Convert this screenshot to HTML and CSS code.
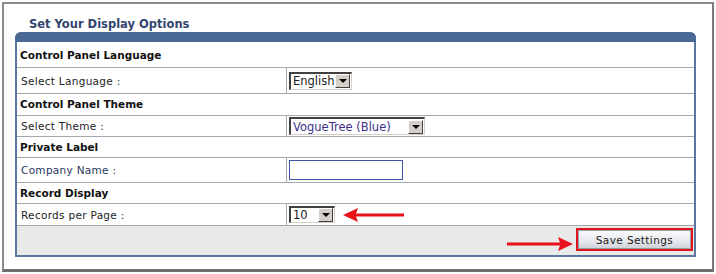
FILE: index.html
```html
<!DOCTYPE html>
<html>
<head>
<meta charset="utf-8">
<link rel="stylesheet" href="styles.css">
</head>
<body>
<div class="frame">
  <h1 class="title">Set Your Display Options</h1>
  <div class="panel">
    <div class="cap"></div>
    <div class="sect first">Control Panel Language</div>
    <div class="row r1">
      <div class="lbl">Select Language :</div>
      <div class="val">
        <div class="sel w-lang"><span class="txt">English</span><span class="btn"><i></i></span></div>
      </div>
    </div>
    <div class="sect s2">Control Panel Theme</div>
    <div class="row r2">
      <div class="lbl">Select Theme :</div>
      <div class="val">
        <div class="sel w-theme"><span class="txt">VogueTree (Blue)</span><span class="btn"><i></i></span></div>
      </div>
    </div>
    <div class="sect s3">Private Label</div>
    <div class="row r3">
      <div class="lbl">Company Name :</div>
      <div class="val"><div class="input"></div></div>
    </div>
    <div class="sect s4">Record Display</div>
    <div class="row r4">
      <div class="lbl">Records per Page :</div>
      <div class="val">
        <div class="sel w-rec"><span class="txt">10</span><span class="btn"><i></i></span></div>
        <svg class="arrow a1" width="61" height="14" viewBox="0 0 61 14"><polygon points="0,7 15,0 13,5.5 61,5.5 61,8.5 13,8.5 15,14" fill="#e8101a"/></svg>
      </div>
    </div>
    <div class="foot">
      <svg class="arrow a2" width="66" height="14" viewBox="0 0 66 14"><polygon points="66,7 51,0 53,5.5 0,5.5 0,8.5 53,8.5 51,14" fill="#e8101a"/></svg>
      <div class="hl"><div class="save">Save Settings</div></div>
    </div>
  </div>
</div>
</body>
</html>
```
FILE: styles.css
```css
html, body { margin: 0; padding: 0; background: #ffffff; }
body { width: 716px; height: 274px; overflow: hidden; font-family: "DejaVu Sans", Verdana, sans-serif; }

.frame {
  box-sizing: border-box;
  margin: 2px 0 0 2px;
  width: 712px;
  height: 270px;
  border: 2px solid #8c8c8c;
  border-right-color: #7a7a7a;
  border-bottom: 3px solid #6e6e6e;
  background: #fff;
  padding: 0 16px 0 11px;
}

.title {
  margin: 0;
  padding: 12px 0 0 14px;
  height: 28px;
  box-sizing: border-box;
  font-size: 11.5px;
  font-weight: bold;
  color: #34456f;
  line-height: 16px;
}

.panel {
  border-left: 2px solid #5b779f;
  border-right: 2px solid #5b779f;
  border-bottom: 2px solid #5b779f;
  border-radius: 6px 6px 0 0;
  background: #fff;
}
.cap {
  height: 10px;
  background: #4a6894;
  margin: 0 -2px;
  border-radius: 6px 6px 0 0;
}

.sect {
  box-sizing: border-box;
  height: 22px;
  padding: 3px 0 0 3px;
  font-size: 10.5px;
  font-weight: bold;
  color: #111;
  line-height: 14px;
  border-bottom: 1px solid #a3a8ae;
}
.sect.first { height: 26px; padding-top: 6px; }
.sect.s3 { height: 21px; }
.sect.s4 { height: 21px; }

.row {
  display: grid;
  grid-template-columns: 270px 1fr;
  border-bottom: 1px solid #a3a8ae;
  box-sizing: border-box;
}
.r1 { height: 26px; }
.r2 { height: 21px; }
.r3 { height: 25px; }
.r4 { height: 22px; }

.lbl {
  border-right: 1px solid #a3a8ae;
  padding-left: 4px;
  font-size: 10.5px;
  color: #222;
  letter-spacing: 0.3px;
  display: flex;
  align-items: center;
}
.r3 .lbl { color: #2a3560; }

.val {
  display: flex;
  align-items: center;
  padding-left: 2px;
}
.r2 .val { align-items: flex-start; padding-top: 1px; }

.sel {
  box-sizing: border-box;
  display: flex;
  align-items: center;
  justify-content: space-between;
  height: 18px;
  border-top: 2px solid #404040;
  border-left: 2px solid #404040;
  border-right: 1px solid #d4d0c8;
  border-bottom: 1px solid #d4d0c8;
  background: #fff;
  padding-right: 1px;
}
.sel .txt {
  font-size: 11.5px;
  color: #1a1a1a;
  padding-left: 2px;
  line-height: 14px;
}
.w-lang { width: 63px; }
.w-theme { width: 136px; }
.w-theme .txt { color: #3b2f8a; }
.w-rec { width: 46px; }
.r4 .sel { height: 17px; }

.btn {
  box-sizing: border-box;
  width: 15px;
  height: 14px;
  background: #d4d0c8;
  border-top: 1px solid #fff;
  border-left: 1px solid #fff;
  border-right: 1px solid #404040;
  border-bottom: 1px solid #404040;
  display: flex;
  align-items: center;
  justify-content: center;
}
.btn i {
  width: 0; height: 0;
  border-left: 4px solid transparent;
  border-right: 4px solid transparent;
  border-top: 4px solid #000;
}

.input {
  box-sizing: border-box;
  width: 114px;
  height: 20px;
  border: 1px solid #3a53a4;
  background: #fff;
}

.arrow { display: block; }
.a1 { margin-left: 8px; }

.foot {
  box-sizing: border-box;
  height: 29px;
  background: #e9e9e9;
  display: flex;
  align-items: flex-start;
  justify-content: flex-end;
  padding: 2px 1px 0 0;
}
.a2 { margin-top: 9px; margin-right: 3px; }
.hl {
  box-sizing: border-box;
  width: 117px;
  height: 23px;
  border: 2px solid #e0141c;
  padding: 0;
}
.save {
  box-sizing: border-box;
  height: 100%;
  border: 1px solid #9aa0a8;
  background: linear-gradient(#fbfbfc, #e6e8ec 60%, #cfd3da);
  font-size: 10.5px;
  color: #1a1a1a;
  letter-spacing: 0.4px;
  display: flex;
  align-items: center;
  justify-content: center;
}
```
